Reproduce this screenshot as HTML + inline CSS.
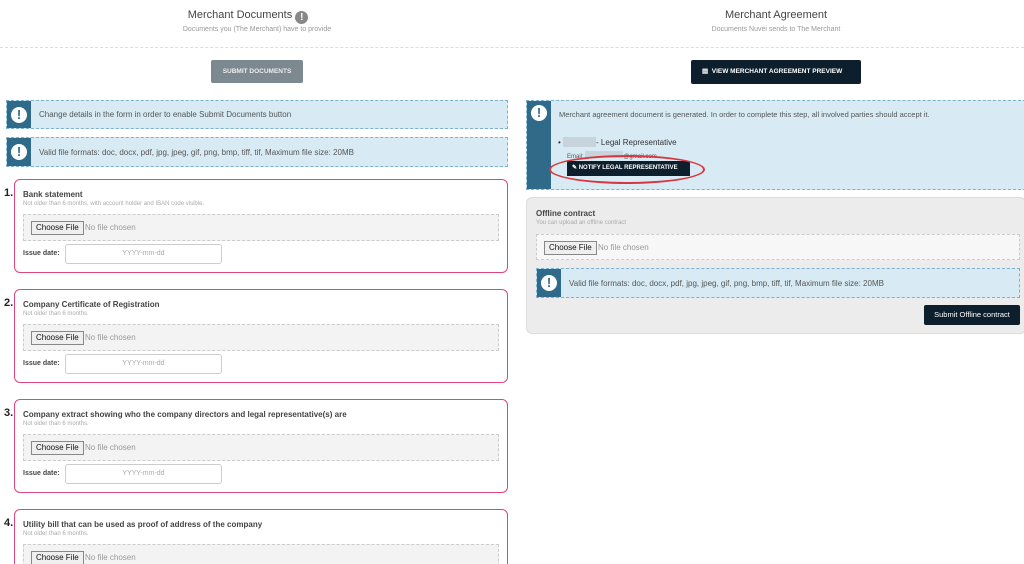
<!DOCTYPE html>
<html style="height:564px;overflow:hidden"><head><meta charset="utf-8"><style>
*{box-sizing:border-box;margin:0;padding:0}
html,body{width:1024px;height:564px;overflow:hidden}
body{background:#fff;font-family:"Liberation Sans",sans-serif;color:#333;position:relative}
.a{position:absolute}
.t{font-size:11px;color:#444;text-align:center;width:300px}
.st{font-size:7px;color:#999;text-align:center;width:300px}
.alert{position:absolute;background:#d8ebf4;border:1px dashed #7fb0cc;font-size:8px;color:#555}
.bar{position:absolute;left:0;top:0;bottom:0;width:24px;background:#2f6a8a}
.ex{position:absolute;left:4px;top:50%;margin-top:-8px;width:16px;height:16px;border-radius:50%;background:#fff;color:#2f6a8a;font-weight:bold;font-size:13px;line-height:16px;text-align:center}
.card{position:absolute;left:14px;width:494px;border:1px solid #e0457b;border-radius:6px}
.num{position:absolute;left:4px;font-size:11px;font-weight:bold;color:#222}
.ct{position:absolute;left:8px;top:10px;font-size:8px;font-weight:bold;color:#444}
.cs{position:absolute;left:8px;top:21px;font-size:6px;color:#aaa}
.fb{position:absolute;background:#f3f3f3;border:1px dashed #ccc;height:27px}
.btnf{position:absolute;left:7px;top:6px;font-size:8px;color:#111;border:1px solid #888;background:#efefef;padding:1px 4px;line-height:10px}
.nf{position:absolute;left:61px;top:8px;font-size:8px;color:#999}
.il{position:absolute;left:8px;top:70px;font-size:7px;font-weight:bold;color:#444}
.inp{position:absolute;left:50px;top:64px;width:157px;height:20px;border:1px solid #ccc;border-radius:3px;font-size:7px;color:#aaa;text-align:center;line-height:18px}
</style></head><body>
<div class="a t" style="left:98px;top:9px">Merchant Documents <span style="display:inline-block;width:13px;height:13px;border-radius:50%;background:#888;color:#fff;font-size:10px;line-height:13px;font-weight:bold;vertical-align:-2px">!</span></div>
<div class="a st" style="left:107px;top:26px">Documents you (The Merchant) have to provide</div>
<div class="a t" style="left:626px;top:9px">Merchant Agreement</div>
<div class="a st" style="left:626px;top:26px">Documents Nuvei sends to The Merchant</div>
<div class="a" style="left:0;top:47px;width:1024px;border-top:1px dashed #ddd"></div>

<div class="a" style="left:211px;top:60px;width:92px;height:23px;background:#7d8990;border-radius:2px;color:#eee;font-size:6.5px;font-weight:bold;text-align:center;line-height:23px">SUBMIT DOCUMENTS</div>
<div class="a" style="left:691px;top:60px;width:170px;height:24px;background:#0d1f2d;border-radius:2px;color:#fff;font-size:6.5px;font-weight:bold;line-height:24px;padding-left:11px">▤ &nbsp;VIEW MERCHANT AGREEMENT PREVIEW</div>

<div class="alert" style="left:6px;top:100px;width:502px;height:29px"><div class="bar"><div class="ex">!</div></div><div class="a" style="left:32px;top:9px">Change details in the form in order to enable Submit Documents button</div></div>
<div class="alert" style="left:6px;top:137px;width:502px;height:30px"><div class="bar"><div class="ex">!</div></div><div class="a" style="left:32px;top:10px">Valid file formats: doc, docx, pdf, jpg, jpeg, gif, png, bmp, tiff, tif, Maximum file size: 20MB</div></div>

<div class="num" style="top:187px">1.</div>
<div class="card" style="top:179px;height:94px"><div class="ct">Bank statement</div><div class="cs">Not older than 6 months, with account holder and IBAN code visible.</div><div class="fb" style="left:8px;top:34px;width:476px"><div class="btnf">Choose File</div><div class="nf">No file chosen</div></div><div class="il">Issue date:</div><div class="inp">YYYY-mm-dd</div></div>

<div class="num" style="top:297px">2.</div>
<div class="card" style="top:289px;height:94px"><div class="ct">Company Certificate of Registration</div><div class="cs">Not older than 6 months.</div><div class="fb" style="left:8px;top:34px;width:476px"><div class="btnf">Choose File</div><div class="nf">No file chosen</div></div><div class="il">Issue date:</div><div class="inp">YYYY-mm-dd</div></div>

<div class="num" style="top:407px">3.</div>
<div class="card" style="top:399px;height:94px"><div class="ct">Company extract showing who the company directors and legal representative(s) are</div><div class="cs">Not older than 6 months.</div><div class="fb" style="left:8px;top:34px;width:476px"><div class="btnf">Choose File</div><div class="nf">No file chosen</div></div><div class="il">Issue date:</div><div class="inp">YYYY-mm-dd</div></div>

<div class="num" style="top:517px">4.</div>
<div class="card" style="top:509px;height:80px"><div class="ct">Utility bill that can be used as proof of address of the company</div><div class="cs">Not older than 6 months.</div><div class="fb" style="left:8px;top:34px;width:476px"><div class="btnf">Choose File</div><div class="nf">No file chosen</div></div></div>

<div class="alert" style="left:526px;top:100px;width:500px;height:90px"><div class="bar"><div class="ex" style="top:4px;margin-top:0">!</div></div>
<div class="a" style="left:32px;top:9px;font-size:7.5px">Merchant agreement document is generated. In order to complete this step, all involved parties should accept it.</div>
<div class="a" style="left:31px;top:36px;font-size:8px;color:#333">• <span style="display:inline-block;width:33px;height:10px;background:#c8d4dc;vertical-align:-2px"></span>- Legal Representative</div>
<div class="a" style="left:40px;top:50px;font-size:6px;color:#555">Email: <span style="display:inline-block;width:38px;height:7px;background:#c8d4dc"></span>@gmail.com</div>
<div class="a" style="left:40px;top:60px;width:123px;height:15px;background:#0d1f2d;color:#fff;font-size:6px;font-weight:bold;line-height:15px;padding-left:5px">✎ NOTIFY LEGAL REPRESENTATIVE</div>
<div class="a" style="left:22px;top:54px;width:156px;height:29px;border:2px solid #d9373f;border-radius:50%"></div>
</div>

<div class="a" style="left:526px;top:197px;width:500px;height:137px;background:#ececec;border:1px solid #ddd;border-radius:6px">
<div class="a" style="left:9px;top:11px;font-size:8px;font-weight:bold;color:#444">Offline contract</div>
<div class="a" style="left:9px;top:22px;font-size:6px;color:#aaa">You can upload an offline contract</div>
<div class="fb" style="left:9px;top:36px;width:484px;height:26px;background:#f7f7f7"><div class="btnf">Choose File</div><div class="nf">No file chosen</div></div>
<div class="alert" style="left:9px;top:70px;width:484px;height:30px"><div class="bar"><div class="ex">!</div></div><div class="a" style="left:32px;top:10px">Valid file formats: doc, docx, pdf, jpg, jpeg, gif, png, bmp, tiff, tif, Maximum file size: 20MB</div></div>
<div class="a" style="left:397px;top:107px;width:96px;height:20px;background:#0d1f2d;border-radius:2px;color:#fff;font-size:7.5px;text-align:center;line-height:20px">Submit Offline contract</div>
</div>
</body></html>
